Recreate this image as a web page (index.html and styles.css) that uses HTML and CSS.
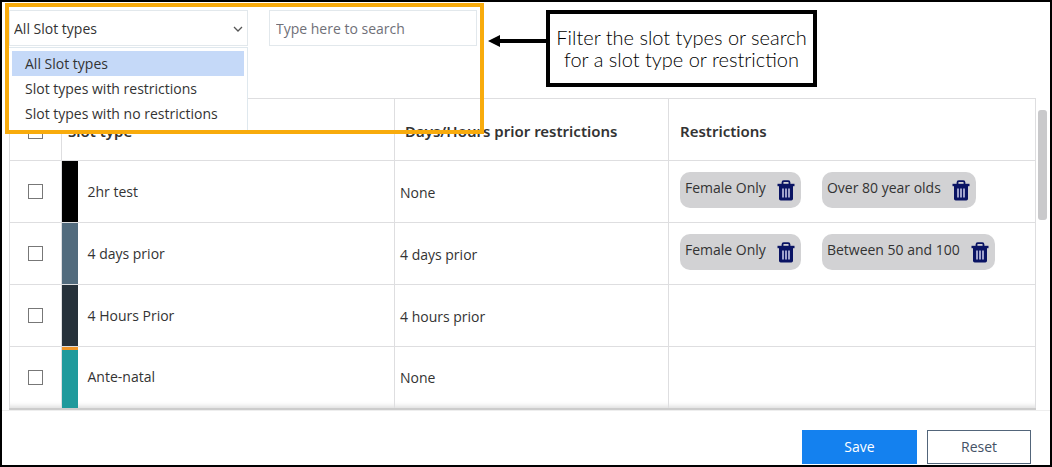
FILE: index.html
```html
<!DOCTYPE html>
<html lang="en">
<head>
<meta charset="utf-8">
<meta name="viewport" content="width=device-width, initial-scale=1">
<title>Slot types</title>
<link rel="stylesheet" href="styles.css">
</head>
<body>
<svg class="sprite" aria-hidden="true">
  <symbol id="trash" viewBox="0 0 18 21">
    <path d="M5.500 4V2.400Q5.500 1.200 6.700 1.200h4.600q1.200 0 1.200 1.200V4" fill="none" stroke="currentColor" stroke-width="1.800"/>
    <path d="M0.500 3.800h17v2.400h-17z" fill="currentColor"/>
    <path d="M2 6h14v12.800q0 1.700-1.700 1.700H3.700Q2 20.500 2 18.800z" fill="currentColor"/>
    <path d="M6 8.500v9M9 8.500v9M12 8.500v9" stroke="#b9bbdd" stroke-width="1.700"/>
  </symbol>
</svg>
<div class="page">
  <header class="toolbar">
    <div class="filter">
      <select class="filter-select" aria-label="Slot type filter">
        <option>All Slot types</option>
        <option>Slot types with restrictions</option>
        <option>Slot types with no restrictions</option>
      </select>
      <svg class="chevron" viewBox="0 0 10 6" aria-hidden="true"><path d="M1 1l4 4 4-4" fill="none" stroke="#555" stroke-width="1.3"/></svg>
      <ul class="menu" role="listbox" aria-label="Slot type options">
        <li class="menu-item selected" role="option" aria-selected="true">All Slot types</li>
        <li class="menu-item" role="option" aria-selected="false">Slot types with restrictions</li>
        <li class="menu-item" role="option" aria-selected="false">Slot types with no restrictions</li>
      </ul>
    </div>
    <input class="search" type="search" placeholder="Type here to search" aria-label="Search slot types">
  </header>

  <main class="content">
    <table class="slots">
      <colgroup><col class="col-check"><col class="col-color"><col class="col-name"><col class="col-prior"><col></colgroup>
      <thead>
        <tr>
          <th class="check"><input class="tick" type="checkbox" aria-label="Select all"></th>
          <th class="head-name" colspan="2">Slot type</th>
          <th class="head-prior">Days/Hours prior restrictions</th>
          <th class="head-restrictions">Restrictions</th>
        </tr>
      </thead>
      <tbody>
        <tr>
          <td class="check"><input class="tick" type="checkbox" aria-label="2hr test"></td>
          <td class="color black"></td>
          <td class="name">2hr test</td>
          <td class="prior">None</td>
          <td class="restrictions"><div class="chips">
            <span class="chip">Female Only<button class="remove" type="button" aria-label="Remove Female Only"><svg class="icon"><use href="#trash"/></svg></button></span>
            <span class="chip">Over 80 year olds<button class="remove" type="button" aria-label="Remove Over 80 year olds"><svg class="icon"><use href="#trash"/></svg></button></span>
          </div></td>
        </tr>
        <tr>
          <td class="check"><input class="tick" type="checkbox" aria-label="4 days prior"></td>
          <td class="color slate"></td>
          <td class="name">4 days prior</td>
          <td class="prior">4 days prior</td>
          <td class="restrictions"><div class="chips">
            <span class="chip">Female Only<button class="remove" type="button" aria-label="Remove Female Only"><svg class="icon"><use href="#trash"/></svg></button></span>
            <span class="chip">Between 50 and 100<button class="remove" type="button" aria-label="Remove Between 50 and 100"><svg class="icon"><use href="#trash"/></svg></button></span>
          </div></td>
        </tr>
        <tr>
          <td class="check"><input class="tick" type="checkbox" aria-label="4 Hours Prior"></td>
          <td class="color navy"></td>
          <td class="name">4 Hours Prior</td>
          <td class="prior">4 hours prior</td>
          <td class="restrictions"></td>
        </tr>
        <tr>
          <td class="check"><input class="tick" type="checkbox" aria-label="Ante-natal"></td>
          <td class="color teal"></td>
          <td class="name">Ante-natal</td>
          <td class="prior">None</td>
          <td class="restrictions"></td>
        </tr>
      </tbody>
    </table>
    <div class="scrollbar"><div class="thumb"></div></div>
  </main>

  <footer class="actions">
    <button class="button save" type="button">Save</button>
    <button class="button reset" type="button">Reset</button>
  </footer>

  <div class="highlight"></div>
  <div class="callout">
    <svg class="arrow" viewBox="0 0 58 12" aria-hidden="true"><path d="M0 6L12 0v12z"/><path d="M10 4h48v4H10z"/></svg>
    <p class="note">Filter the slot types or search<br>for a slot type or restriction</p>
  </div>
</div>
</body>
</html>
```
FILE: styles.css
```css
* {
  box-sizing: border-box;
}

body {
  margin: 0;
  font-family: "Open Sans", "Noto Sans", sans-serif;
  font-size: 14px;
  line-height: 20px;
  color: #333;
  background: #fff;
}

.sprite {
  position: absolute;
  width: 0;
  height: 0;
}

.page {
  position: relative;
  display: flex;
  flex-direction: column;
  min-height: 100vh;
  border: 2px solid #000;
}

.toolbar {
  display: flex;
  align-items: flex-start;
  gap: 21px;
  padding: 8px 7px 52px;
}

.filter {
  position: relative;
  width: 239px;
}

.filter-select,
.search {
  display: block;
  width: 100%;
  height: 36px;
  border: 1px solid #e2e8ec;
  border-radius: 0;
  background: #fff;
  font: inherit;
  color: #333;
  appearance: none;
}

.filter-select {
  padding: 2px 24px 0 4px;
}

.search {
  width: 208px;
  padding: 0 6px;
}

.search::placeholder {
  color: #707078;
  opacity: 1;
}

.chevron {
  position: absolute;
  top: 16px;
  right: 5px;
  width: 10px;
  height: 6px;
}

.menu {
  position: absolute;
  top: 37px;
  left: 0;
  z-index: 2;
  width: 100%;
  margin: 0;
  padding: 3px 3px 4px;
  list-style: none;
  background: #fff;
  border: 1px solid #dfe8ee;
  border-width: 1px 1px 0 0;
}

.menu-item {
  height: 25px;
  padding: 0 13px;
  line-height: 25px;
}

.menu-item.selected {
  background: #c5d9f8;
}

.content {
  display: grid;
  grid-template-columns: 1fr 9px;
  gap: 2px;
  padding: 0 3px 0 7px;
}

.slots {
  width: 100%;
  table-layout: fixed;
  border-collapse: collapse;
  box-shadow: inset 0 -6px 5px -4px #ddd;
  border-bottom: 2px solid #ccc;
}

.col-check { width: 52px; }
.col-color { width: 16px; }
.col-name { width: 317px; }
.col-prior { width: 274px; }

.slots th,
.slots td {
  height: 62px;
  padding: 0;
  border: 1px solid #dedee0;
  text-align: left;
  vertical-align: middle;
}

.slots th {
  padding-top: 3px;
  font-family: "Noto Sans", "Open Sans", sans-serif;
  font-size: 15px;
  font-weight: 600;
}

.slots .check {
  text-align: center;
}

.tick {
  display: block;
  width: 15px;
  height: 15px;
  margin: 0 auto;
  border: 1px solid #777;
  background: #fff;
  appearance: none;
}

.slots .head-name { padding-left: 6px; }
.slots .head-prior { padding-left: 10px; }
.slots .head-restrictions { padding-left: 11px; }

.slots .name {
  padding-left: 10px;
  border-left: 0;
}

.slots .color { border-right: 0; }
.slots .prior { padding: 2px 0 0 5px; }
.slots .restrictions { padding: 0 0 3px 11px; }

.black { background: #000; }
.slate { background: #526b7d; }
.navy { background: #26313a; }

.teal {
  background: #1f9a9c;
  box-shadow: inset 0 3px #ef9528;
}

.chips {
  display: flex;
  gap: 21px;
}

.chip {
  display: flex;
  gap: 11px;
  height: 36px;
  padding: 6px 6px 0 5px;
  border-radius: 10px;
  background: #d2d2d4;
  white-space: nowrap;
}

.remove {
  width: 18px;
  height: 21px;
  margin-top: 2px;
  padding: 0;
  border: 0;
  background: none;
  color: #0a1464;
}

.icon {
  display: block;
  width: 18px;
  height: 21px;
}

.scrollbar {
  padding-top: 12px;
}

.thumb {
  height: 110px;
  border-radius: 3px;
  background: #c9c9cb;
}

.actions {
  display: flex;
  justify-content: flex-end;
  gap: 10px;
  padding: 19px 19px 0 0;
  border-top: 1px solid #eee;
}

.button {
  height: 34px;
  border: 1px solid #1481ef;
  font: inherit;
}

.save {
  width: 115px;
  color: #fff;
  background: #1481ef;
}

.reset {
  width: 104px;
  border-color: #52657a;
  color: #445266;
  background: #fff;
}

.highlight {
  position: absolute;
  top: 1px;
  left: 3px;
  z-index: 3;
  width: 479px;
  height: 131px;
  border: 4px solid #f8ab0c;
  pointer-events: none;
}

.callout {
  position: absolute;
  top: 8px;
  left: 486px;
  z-index: 3;
  display: flex;
}

.arrow {
  width: 58px;
  height: 12px;
  margin-top: 25px;
}

.note {
  width: 271px;
  height: 77px;
  margin: 0;
  padding: 12px 0;
  border: 4px solid #000;
  background: #fff;
  font-family: Lato, sans-serif;
  font-size: 20px;
  font-weight: 300;
  line-height: 22px;
  color: #000;
  text-align: center;
  white-space: nowrap;
}
```
